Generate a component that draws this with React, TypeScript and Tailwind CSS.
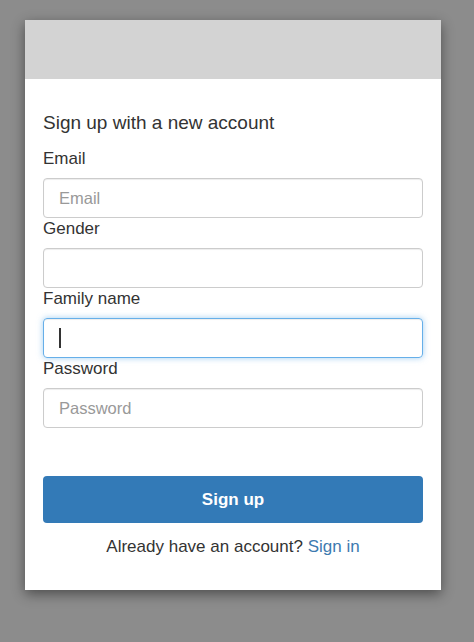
import React from "react";

const fields = [
  { label: "Email", placeholder: "Email", focused: false },
  { label: "Gender", placeholder: "", focused: false },
  { label: "Family name", placeholder: "", focused: true },
  { label: "Password", placeholder: "Password", focused: false },
];

export default function App() {
  return (
    <div
      className="min-h-[642px] w-full bg-[#8c8c8c] pt-[20px] pl-[25px]"
      style={{ fontFamily: '"Liberation Sans", Arial, sans-serif' }}
    >
      <div className="w-[416px] bg-white shadow-[0_4px_12px_rgba(0,0,0,0.45)]">
        {/* Banner */}
        <div className="h-[59px] bg-[#d3d3d3]" />

        <div className="px-[18px] pt-[32px] pb-[33px] text-[#333]">
          <h1 className="text-[19px] leading-[24px] mb-[13px]">Sign up with a new account</h1>

          {fields.map((f) => (
            <div key={f.label}>
              <label className="block text-[17px] leading-[22px] mb-[8px]">{f.label}</label>
              <div className="relative">
                <input
                  readOnly
                  placeholder={f.placeholder}
                  type={f.label === "Password" ? "password" : "text"}
                  className={`block w-full h-[40px] rounded-[4px] border px-[15px] text-[16.5px] outline-none placeholder:text-[#999] ${
                    f.focused
                      ? "border-[#66afe9] shadow-[inset_0_1px_1px_rgba(0,0,0,0.075),0_0_6px_rgba(102,175,233,0.6)]"
                      : "border-[#ccc] shadow-[inset_0_1px_1px_rgba(0,0,0,0.075)]"
                  }`}
                />
                {f.focused && (
                  <span className="absolute left-[16px] top-[10px] h-[20px] w-[1.5px] bg-[#333]" />
                )}
              </div>
            </div>
          ))}

          <button
            type="button"
            className="mt-[48px] block w-full h-[47px] rounded-[4px] bg-[#337ab7] text-white text-[17px] font-bold"
          >
            Sign up
          </button>

          <p className="mt-[14px] text-center text-[17px] leading-[20px]">
            Already have an account? <a className="text-[#3d7ab0]">Sign in</a>
          </p>
        </div>
      </div>
    </div>
  );
}
